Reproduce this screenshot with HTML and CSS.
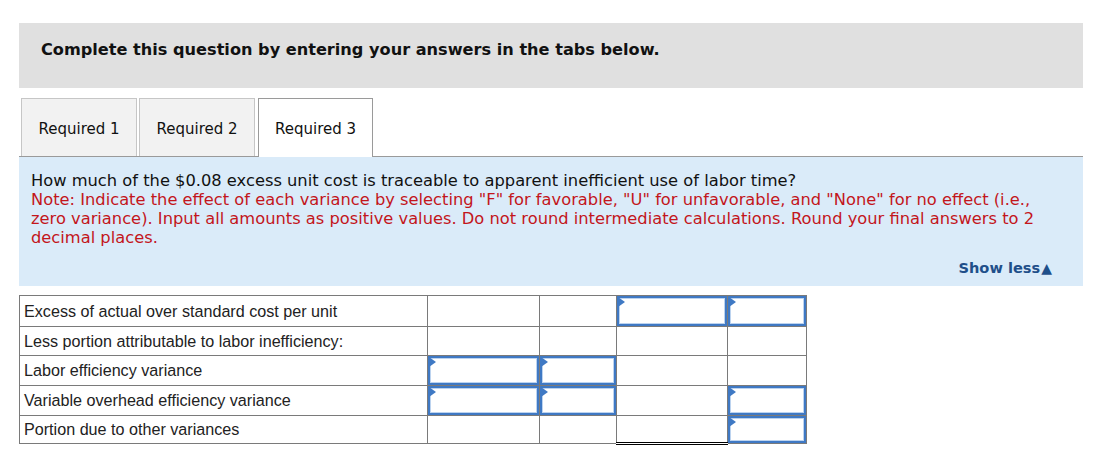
FILE: index.html
```html
<!DOCTYPE html>
<html>
<head>
<meta charset="utf-8">
<link rel="stylesheet" href="styles.css">
</head>
<body>
<div class="page">
  <div class="banner">Complete this question by entering your answers in the tabs below.</div>
  <div class="tabs">
    <div class="tab">Required 1</div>
    <div class="tab">Required 2</div>
    <div class="tab active">Required 3</div>
  </div>
  <div class="panel">
    <p class="question">How much of the $0.08 excess unit cost is traceable to apparent inefficient use of labor time?</p>
    <p class="note">Note: Indicate the effect of each variance by selecting "F" for favorable, "U" for unfavorable, and "None" for no effect (i.e., zero variance). Input all amounts as positive values. Do not round intermediate calculations. Round your final answers to 2 decimal places.</p>
    <div class="showless">Show less<span class="tri">&#9650;</span></div>
  </div>
  <table class="grid">
    <colgroup>
      <col class="c1"><col class="c2"><col class="c3"><col class="c4"><col class="c5">
    </colgroup>
    <tr class="r1">
      <td class="label">Excess of actual over standard cost per unit</td>
      <td></td><td></td>
      <td class="inp"><div class="box"></div></td>
      <td class="inp"><div class="box"></div></td>
    </tr>
    <tr class="r2">
      <td class="label">Less portion attributable to labor inefficiency:</td>
      <td></td><td></td><td></td><td></td>
    </tr>
    <tr class="r3">
      <td class="label">Labor efficiency variance</td>
      <td class="inp"><div class="box"></div></td>
      <td class="inp"><div class="box"></div></td>
      <td></td><td></td>
    </tr>
    <tr class="r4">
      <td class="label">Variable overhead efficiency variance</td>
      <td class="inp"><div class="box"></div></td>
      <td class="inp"><div class="box"></div></td>
      <td></td>
      <td class="inp"><div class="box"></div></td>
    </tr>
    <tr class="r5">
      <td class="label">Portion due to other variances</td>
      <td class="top"></td>
      <td class="top"></td>
      <td class="top dbl"></td>
      <td class="top inp"><div class="box"></div></td>
    </tr>
  </table>
</div>
</body>
</html>
```

FILE: styles.css
```css
html, body {
  margin: 0;
  padding: 0;
  background: #fff;
}
.page {
  padding: 23px 0 0 19px;
  width: 1064px;
  font-family: "DejaVu Sans", Verdana, sans-serif;
}
.banner {
  height: 65px;
  background: #e0e0e0;
  box-sizing: border-box;
  padding: 17px 0 0 22px;
  font-weight: bold;
  font-size: 16.15px;
  line-height: 20px;
  color: #111;
}
.tabs {
  display: flex;
  margin-top: 10px;
  padding-left: 2px;
  gap: 2px;
  height: 58px;
  border-bottom: 1px solid #9a9a9a;
}
.tab {
  width: 116px;
  height: 58px;
  box-sizing: border-box;
  border: 1px solid #c6c6c6;
  border-bottom: none;
  background: #f2f2f2;
  display: flex;
  align-items: center;
  justify-content: center;
  font-size: 15px;
  color: #111;
  padding-top: 2px;
}
.tab.active {
  margin-left: 1px;
  width: 115px;
  height: 59px;
  background: #fff;
  border-color: #9a9a9a;
  position: relative;
  z-index: 1;
}
.panel {
  background: #daebf9;
  height: 129px;
  box-sizing: border-box;
  padding: 14px 40px 0 12px;
  font-size: 16.3px;
  line-height: 19px;
}
.panel p {
  margin: 0;
}
.question {
  color: #111;
}
.note {
  color: #c3161c;
}
.showless {
  text-align: right;
  margin: 11px -9px 0 0;
  font-weight: bold;
  font-size: 14.6px;
  line-height: 19px;
  color: #1f4f8a;
}
.showless .tri {
  font-size: 14px;
  margin-left: 1px;
}
.grid {
  margin-top: 9px;
  border-collapse: collapse;
  table-layout: fixed;
  width: 787px;
  font-family: "Liberation Sans", Arial, sans-serif;
  font-size: 16.15px;
  color: #222;
}
.c1 { width: 408px; }
.c2 { width: 112px; }
.c3 { width: 77px; }
.c4 { width: 111px; }
.c5 { width: 79px; }
.grid td {
  border: 1px solid #7a7a7a;
  padding: 0;
  box-sizing: border-box;
}
.grid tr.r1 td { height: 31px; }
.grid tr.r2 td { height: 29px; }
.grid tr.r3 td { height: 30px; }
.grid tr.r4 td { height: 30px; }
.grid tr.r5 td { height: 28px; }
.grid td.label {
  padding: 0 4px;
}
.grid td.top {
  border-top: 1px solid #000;
}
.grid td.dbl {
  border-bottom: 3px double #000;
}
.grid td.inp {
  padding: 0;
  vertical-align: top;
}
.box {
  position: relative;
  height: 100%;
  box-sizing: border-box;
  border: 2px solid #3f79c4;
  box-shadow: inset 0 0 0 1px #bcd3ef;
  background: #fff;
}
.box::before {
  content: "";
  position: absolute;
  left: -1px;
  top: -1px;
  width: 0;
  height: 0;
  border-top: 5px solid transparent;
  border-bottom: 5px solid transparent;
  border-left: 7px solid #3f79c4;
}
```
